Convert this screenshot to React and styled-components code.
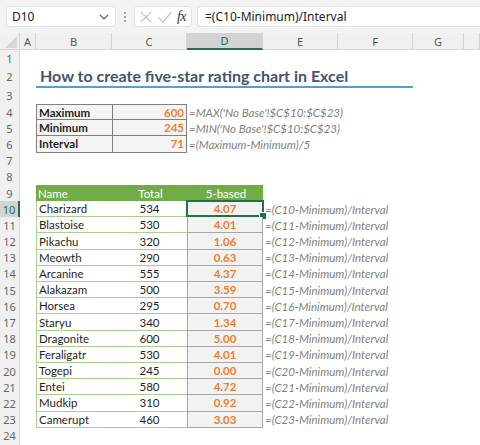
import React from 'react'
import styled, { createGlobalStyle } from 'styled-components'

const GlobalStyle = createGlobalStyle`
  html, body {
    margin: 0;
    padding: 0;
    background: #ffffff;
    overflow: hidden;
  }
  * { box-sizing: border-box; }
`;

const COLS = '20px 16px 76px 75px 76px 75px 75px 51px 1fr';
const ROW_H = 16.2;

const info = [
  ['Maximum', '600', "=MAX('No Base'!$C$10:$C$23)"],
  ['Minimum', '245', "=MIN('No Base'!$C$10:$C$23)"],
  ['Interval', '71', '=(Maximum-Minimum)/5'],
];

const pokemon = [
  ['Charizard', 534, '4.07'],
  ['Blastoise', 530, '4.01'],
  ['Pikachu', 320, '1.06'],
  ['Meowth', 290, '0.63'],
  ['Arcanine', 555, '4.37'],
  ['Alakazam', 500, '3.59'],
  ['Horsea', 295, '0.70'],
  ['Staryu', 340, '1.34'],
  ['Dragonite', 600, '5.00'],
  ['Feraligatr', 530, '4.01'],
  ['Togepi', 245, '0.00'],
  ['Entei', 580, '4.72'],
  ['Mudkip', 310, '0.92'],
  ['Camerupt', 460, '3.03'],
];

const App = () => {
  return (
    <>
      <GlobalStyle />
      <Toolbar>
        <NameBox>
          <span>D10</span>
          <svg width="10" height="6" viewBox="0 0 10 6">
            <path d="M1 1 L5 5 L9 1" fill="none" stroke="#555" strokeWidth="1.1" />
          </svg>
        </NameBox>
        <Grip>
          <i /><i /><i />
        </Grip>
        <FxBox>
          <svg width="14" height="14" viewBox="0 0 14 14">
            <path d="M2 2 L12 12 M12 2 L2 12" stroke="#c6c6c6" strokeWidth="1.2" />
          </svg>
          <svg width="16" height="14" viewBox="0 0 16 14">
            <path d="M1.5 7.5 L6 12 L14.5 2" fill="none" stroke="#c6c6c6" strokeWidth="1.2" />
          </svg>
          <FxLabel>fx</FxLabel>
        </FxBox>
        <FormulaBox>=(C10-Minimum)/Interval</FormulaBox>
      </Toolbar>

      <Sheet>
        <HeaderRow>
          <Corner>
            <svg width="12" height="12" viewBox="0 0 12 12">
              <path d="M12 0 L12 12 L0 12 Z" fill="#d6d6d6" />
            </svg>
          </Corner>
          {['A', 'B', 'C', 'D', 'E', 'F', 'G', ''].map((c) => (
            <ColHead key={c} $active={c === 'D'}>{c}</ColHead>
          ))}
        </HeaderRow>

        <Row $h={ROW_H}><RowNum>1</RowNum></Row>
        <Row $h={21.6}>
          <RowNum>2</RowNum>
          <Title>How to create five-star rating chart in Excel</Title>
        </Row>
        <Row $h={ROW_H}><RowNum>3</RowNum></Row>

        {info.map(([label, value, formula], i) => (
          <Row key={label} $h={ROW_H}>
            <RowNum>{i + 4}</RowNum>
            <InfoLabel $first={i === 0}>{label}</InfoLabel>
            <InfoValue $first={i === 0}>{value}</InfoValue>
            <Formula $col={5}>{formula}</Formula>
          </Row>
        ))}

        <Row $h={ROW_H}><RowNum>7</RowNum></Row>
        <Row $h={ROW_H}><RowNum>8</RowNum></Row>

        <Row $h={ROW_H}>
          <RowNum>9</RowNum>
          <HeadCell $col={3}>Name</HeadCell>
          <HeadCell $col={4} $center>Total</HeadCell>
          <HeadCell $col={5} $center>5-based</HeadCell>
        </Row>

        {pokemon.map(([name, total, score], i) => (
          <Row key={name} $h={ROW_H}>
            <RowNum $active={i === 0}>{i + 10}</RowNum>
            <NameCell>{name}</NameCell>
            <TotalCell>{total}</TotalCell>
            <ScoreCell $selected={i === 0}>{score}</ScoreCell>
            <Formula $col={6}>{`=(C${i + 10}-Minimum)/Interval`}</Formula>
          </Row>
        ))}

        <Row $h={ROW_H}><RowNum>24</RowNum></Row>
        <Row $h={ROW_H}><RowNum /></Row>
      </Sheet>
    </>
  );
};

const Toolbar = styled.div`
  height: 33px;
  background: #f3f3f3;
  display: flex;
  align-items: center;
  padding: 0 0 0 6px;
  font-family: "Noto Sans", "Open Sans", sans-serif;
  font-size: 12px;
  color: #222;
`;

const NameBox = styled.div`
  width: 110px;
  height: 21px;
  background: #fff;
  border: 1px solid #e2e2e2;
  border-radius: 4px;
  display: flex;
  align-items: center;
  justify-content: space-between;
  padding: 0 6px 0 5px;
`;

const Grip = styled.div`
  width: 18px;
  display: flex;
  flex-direction: column;
  align-items: center;
  gap: 2px;

  i {
    width: 2px;
    height: 2px;
    background: #8a8a8a;
    border-radius: 1px;
  }
`;

const FxBox = styled.div`
  width: 58px;
  height: 21px;
  background: #fff;
  border: 1px solid #e2e2e2;
  border-radius: 4px;
  display: flex;
  align-items: center;
  justify-content: space-between;
  padding: 0 5px 0 4px;
`;

const FxLabel = styled.span`
  font-family: "Liberation Serif", "DejaVu Serif", serif;
  font-style: italic;
  font-size: 14px;
  color: #333;
  letter-spacing: -0.5px;
`;

const FormulaBox = styled.div`
  flex: 1;
  height: 21px;
  margin-left: 5px;
  background: #fff;
  border: 1px solid #e2e2e2;
  border-right: none;
  border-radius: 4px 0 0 4px;
  display: flex;
  align-items: center;
  padding-left: 7px;
`;

const Sheet = styled.div`
  display: flex;
  flex-direction: column;
  font-family: "Lato", "Open Sans", sans-serif;
  font-size: 11.5px;
  color: #1f1f1f;
`;

const HeaderRow = styled.div`
  display: grid;
  grid-template-columns: ${COLS};
  height: 17px;
  background: #f0f0f0;
  border-bottom: 1px solid #d4d4d4;
`;

const Corner = styled.div`
  display: flex;
  align-items: flex-end;
  justify-content: flex-end;
  padding: 0 2px 2px 0;
  border-right: 1px solid #d4d4d4;
`;

const ColHead = styled.div`
  display: flex;
  align-items: center;
  justify-content: center;
  font-family: "Noto Sans", "Open Sans", sans-serif;
  font-size: 11px;
  color: ${({ $active }) => ($active ? '#1e6e41' : '#555')};
  background: ${({ $active }) => ($active ? '#d3d3d3' : 'transparent')};
  border-right: 1px solid #d4d4d4;
  border-bottom: ${({ $active }) => ($active ? '2px solid #217346' : 'none')};
`;

const Row = styled.div`
  display: grid;
  grid-template-columns: ${COLS};
  height: ${({ $h }) => $h}px;
`;

const RowNum = styled.div`
  grid-column: 1;
  display: flex;
  align-items: center;
  justify-content: center;
  font-family: "Noto Sans", "Open Sans", sans-serif;
  font-size: 11px;
  color: ${({ $active }) => ($active ? '#1e6e41' : '#666')};
  background: ${({ $active }) => ($active ? '#d3d3d3' : '#f0f0f0')};
  border-right: ${({ $active }) => ($active ? '2px solid #217346' : '1px solid #d4d4d4')};
`;

const Title = styled.div`
  grid-column: 3 / 8;
  display: flex;
  align-items: center;
  padding: 0 0 0 4px;
  font-size: 16px;
  font-weight: 700;
  color: #44546a;
  border-bottom: 2px solid #5b9bd5;
  white-space: nowrap;
`;

const InfoLabel = styled.div`
  grid-column: 3;
  display: flex;
  align-items: center;
  padding-left: 2px;
  font-weight: 700;
  background: #f4f4f4;
  border: 1px solid #7f7f7f;
  border-top-width: ${({ $first }) => ($first ? '1px' : '0')};
  border-right: none;
`;

const InfoValue = styled.div`
  grid-column: 4;
  display: flex;
  align-items: center;
  justify-content: flex-end;
  padding-right: 2px;
  font-weight: 700;
  color: #ed7d31;
  background: #f4f4f4;
  border: 1px solid #7f7f7f;
  border-top-width: ${({ $first }) => ($first ? '1px' : '0')};
`;

const Formula = styled.div`
  grid-column: ${({ $col }) => $col} / span 4;
  display: flex;
  align-items: center;
  padding-left: 2px;
  font-style: italic;
  color: #7f7f7f;
  white-space: nowrap;
`;

const HeadCell = styled.div`
  grid-column: ${({ $col }) => $col};
  display: flex;
  align-items: center;
  justify-content: ${({ $center }) => ($center ? 'center' : 'flex-start')};
  padding-left: 2px;
  background: #70ad47;
  color: #fff;
`;

const NameCell = styled.div`
  grid-column: 3;
  display: flex;
  align-items: center;
  padding-left: 2px;
  border-left: 1px solid #a9d08e;
  border-bottom: 1px solid #a9d08e;
`;

const TotalCell = styled.div`
  grid-column: 4;
  display: flex;
  align-items: center;
  justify-content: center;
  border-bottom: 1px solid #a9d08e;
`;

const ScoreCell = styled.div`
  grid-column: 5;
  position: relative;
  display: flex;
  align-items: center;
  justify-content: center;
  font-weight: 700;
  color: #ed7d31;
  background: #f2f2f2;
  border: 1px solid #a6a6a6;
  border-top: none;

  ${({ $selected }) =>
    $selected &&
    `
    &::before {
      content: '';
      position: absolute;
      inset: -1px -2px -1px -2px;
      border: 2px solid #217346;
      pointer-events: none;
    }
    &::after {
      content: '';
      position: absolute;
      right: -5px;
      bottom: -4px;
      width: 6px;
      height: 6px;
      background: #217346;
      border: 1px solid #fff;
    }
  `}
`;

export default App;
